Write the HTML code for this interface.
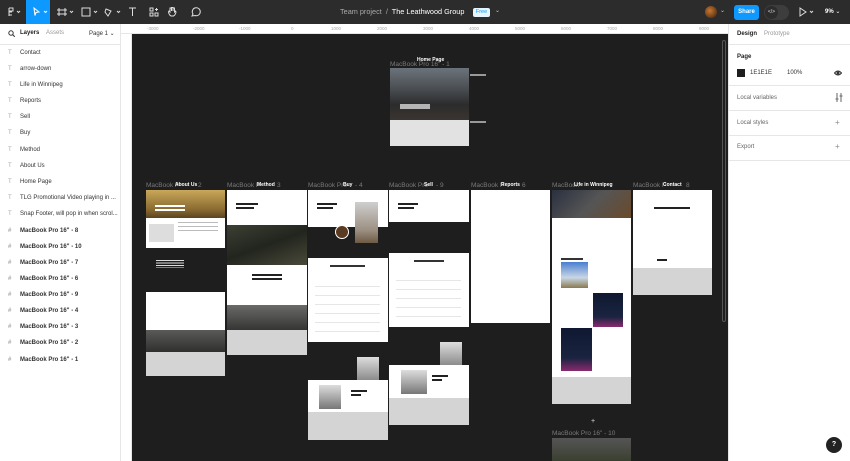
<!DOCTYPE html>
<html><head><meta charset="utf-8"><style>
*{margin:0;padding:0;box-sizing:border-box}
body{width:850px;height:461px;overflow:hidden;background:#1e1e1e;font-family:"Liberation Sans",sans-serif;position:relative}
.a{position:absolute}
.top{left:0;top:0;width:850px;height:24px;background:#2c2c2c}
.left{left:0;top:24px;width:121px;height:437px;background:#fff;border-right:1px solid #e6e6e6}
.right{left:728px;top:24px;width:122px;height:437px;background:#fff;border-left:1px solid #e6e6e6}
.hr{left:121px;top:24px;width:607px;height:10px;background:#fff;border-bottom:1px solid #e6e6e6}
.vr{left:121px;top:34px;width:11px;height:427px;background:#fff;border-right:1px solid #e6e6e6}
.ly{left:8px;font-size:6px;color:#333;height:10px;line-height:10px;white-space:nowrap}
.ly i{font-style:normal;color:#aaa;display:inline-block;width:12px}
.ly.b{font-weight:bold}
.rl{font-size:4.5px;color:#aaa}
.w{background:#fff}.d{background:#232323}.g{background:#d4d4d4}
.lbl{font-size:6.5px;color:#7a7a7a;white-space:nowrap}
.lw{font-size:5px;color:#fff;font-weight:bold;white-space:nowrap}
.t{background:#222;height:2px}
</style></head><body>
<div class="a top">
 <div class="a" style="left:26px;top:0;width:24px;height:24px;background:#0d99ff"></div>
 <svg class="a" style="left:0;top:0" width="210" height="24" fill="none" stroke="#ddd" stroke-width="1">
  <path d="M9 8v8M9 8h4v3H9M9 12h3M9 15h3M17 11l1.5 1.5L20 11"/>
  <path d="M34 8l5 4-3 .5-1 3z" stroke="#fff"/><path d="M44 11l1.5 1.5L47 11" stroke="#fff"/>
  <path d="M59 8v8M65 8v8M57 10h10M57 14h10M70 11l1.5 1.5L73 11"/>
  <rect x="82" y="8" width="8" height="8"/><path d="M94 11l1.5 1.5L97 11"/>
  <path d="M106 9l5 2-3 5-3-4zM117 11l1.5 1.5L120 11"/>
  <path d="M129 8h7M132.5 8v8"/>
  <rect x="150" y="8" width="3" height="3"/><rect x="150" y="13" width="3" height="3"/><rect x="155" y="13" width="3" height="3"/><path d="M156.5 8v3M155 9.5h3"/>
  <path d="M171 16c-2-1-3-4-2-5l1 1V8h1.5v3V7.5h1.5V11V8h1.5v4l1-1c1 1 0 4-2 5z"/>
  <path d="M192 16l1-2a4 4 0 1 1 2 1.5z"/>
 </svg>
 <div class="a" style="left:340px;top:7px;font-size:7.3px;color:#aaa;white-space:nowrap">Team project &nbsp;/&nbsp; <span style="color:#fff">The Leathwood Group</span></div>
 <div class="a" style="left:473px;top:8px;width:17px;height:9px;background:#e5f4ff;color:#0d99ff;font-size:5.5px;text-align:center;line-height:9px;border-radius:2px">Free</div>
 <div class="a" style="left:495px;top:7px;font-size:6px;color:#ccc">⌄</div>
 <div class="a" style="left:705px;top:6px;width:12px;height:12px;border-radius:6px;background:radial-gradient(circle at 40% 40%,#c9772e,#3b2010)"></div>
 <div class="a" style="left:720px;top:7px;font-size:6px;color:#ccc">⌄</div>
 <div class="a" style="left:734px;top:5px;width:25px;height:15px;background:#0d99ff;border-radius:3px;color:#fff;font-size:6px;font-weight:bold;text-align:center;line-height:15px">Share</div>
 <div class="a" style="left:764px;top:5px;width:25px;height:15px;background:#3d3d3d;border-radius:8px"><div class="a" style="left:1px;top:1px;width:13px;height:13px;border-radius:7px;background:#2c2c2c;color:#ddd;font-size:5px;text-align:center;line-height:13px">&lt;/&gt;</div></div>
 <svg class="a" style="left:798px;top:7px" width="20" height="10" fill="none" stroke="#ddd"><path d="M2 1l6 4-6 4z"/><path d="M12 4l1.5 1.5L15 4"/></svg>
 <div class="a" style="left:825px;top:8px;font-size:6px;color:#fff;font-weight:bold">9% <span style="font-weight:normal">⌄</span></div>
</div>

<div class="a left">
 <svg class="a" style="left:8px;top:6px" width="7" height="7" fill="none" stroke="#333"><circle cx="3" cy="3" r="2.2"/><path d="M4.6 4.6L6.8 6.8"/></svg>
 <div class="a" style="left:20px;top:6px;font-size:6px;color:#222;font-weight:bold">Layers</div>
 <div class="a" style="left:46px;top:6px;font-size:6px;color:#999">Assets</div>
 <div class="a" style="left:89px;top:6px;font-size:6px;color:#333">Page 1 ⌄</div>
 <div class="a" style="left:0;top:20px;width:121px;border-top:1px solid #e6e6e6"></div>
</div>
<div class="a ly" style="top:48px"><i>T</i>Contact</div>
<div class="a ly" style="top:64px"><i>T</i>arrow-down</div>
<div class="a ly" style="top:80px"><i>T</i>Life in Winnipeg</div>
<div class="a ly" style="top:96px"><i>T</i>Reports</div>
<div class="a ly" style="top:112px"><i>T</i>Sell</div>
<div class="a ly" style="top:128px"><i>T</i>Buy</div>
<div class="a ly" style="top:145px"><i>T</i>Method</div>
<div class="a ly" style="top:161px"><i>T</i>About Us</div>
<div class="a ly" style="top:177px"><i>T</i>Home Page</div>
<div class="a ly" style="top:193px"><i>T</i>TLG Promotional Video playing in ...</div>
<div class="a ly" style="top:209px"><i>T</i>Snap Footer, will pop in when scrol...</div>
<div class="a ly b" style="top:226px"><i>#</i>MacBook Pro 16" - 8</div>
<div class="a ly b" style="top:242px"><i>#</i>MacBook Pro 16" - 10</div>
<div class="a ly b" style="top:258px"><i>#</i>MacBook Pro 16" - 7</div>
<div class="a ly b" style="top:274px"><i>#</i>MacBook Pro 16" - 6</div>
<div class="a ly b" style="top:290px"><i>#</i>MacBook Pro 16" - 9</div>
<div class="a ly b" style="top:306px"><i>#</i>MacBook Pro 16" - 4</div>
<div class="a ly b" style="top:322px"><i>#</i>MacBook Pro 16" - 3</div>
<div class="a ly b" style="top:338px"><i>#</i>MacBook Pro 16" - 2</div>
<div class="a ly b" style="top:355px"><i>#</i>MacBook Pro 16" - 1</div>

<div class="a hr">
 <span class="a rl" style="left:26px;top:2px">-3000</span><span class="a rl" style="left:72px;top:2px">-2000</span><span class="a rl" style="left:118px;top:2px">-1000</span><span class="a rl" style="left:170px;top:2px">0</span><span class="a rl" style="left:210px;top:2px">1000</span><span class="a rl" style="left:256px;top:2px">2000</span><span class="a rl" style="left:302px;top:2px">3000</span><span class="a rl" style="left:348px;top:2px">4000</span><span class="a rl" style="left:394px;top:2px">5000</span><span class="a rl" style="left:440px;top:2px">6000</span><span class="a rl" style="left:486px;top:2px">7000</span><span class="a rl" style="left:532px;top:2px">8000</span><span class="a rl" style="left:578px;top:2px">9000</span>
</div>
<div class="a vr"></div>

<div class="a lw" style="left:417px;top:57px">Home Page</div>
<div class="a lbl" style="left:390px;top:61px">MacBook Pro 16" - 1</div>
<div class="a" style="left:390px;top:68px;width:79px;height:52px;background:linear-gradient(180deg,#6b737a 0%,#4a4e52 40%,#2b2c2c 70%,#3a3430 100%)"></div>
<div class="a" style="left:400px;top:104px;width:30px;height:5px;background:#eee;opacity:.7"></div>
<div class="a" style="left:390px;top:120px;width:79px;height:26px;background:#e2e2e2"></div>
<div class="a" style="left:470px;top:74px;width:16px;height:1.5px;background:#999"></div>
<div class="a" style="left:470px;top:121px;width:16px;height:1.5px;background:#999"></div>

<div class="a lbl" style="left:146px;top:182px">MacBook P</div><div class="a lw" style="left:175px;top:182px">About Us</div><div class="a lbl" style="left:198px;top:182px">2</div>
<div class="a lbl" style="left:227px;top:182px">MacBook P</div><div class="a lw" style="left:257px;top:182px">Method</div><div class="a lbl" style="left:277px;top:182px">3</div>
<div class="a lbl" style="left:308px;top:182px">MacBook Pro</div><div class="a lw" style="left:343px;top:182px">Buy</div><div class="a lbl" style="left:355px;top:182px">- 4</div>
<div class="a lbl" style="left:389px;top:182px">MacBook Pro</div><div class="a lw" style="left:424px;top:182px">Sell</div><div class="a lbl" style="left:436px;top:182px">- 9</div>
<div class="a lbl" style="left:471px;top:182px">MacBook P</div><div class="a lw" style="left:501px;top:182px">Reports</div><div class="a lbl" style="left:522px;top:182px">6</div>
<div class="a lbl" style="left:552px;top:182px">MacBook</div><div class="a lw" style="left:574px;top:182px">Life in Winnipeg</div>
<div class="a lbl" style="left:633px;top:182px">MacBook P</div><div class="a lw" style="left:663px;top:182px">Contact</div><div class="a lbl" style="left:686px;top:182px">8</div>

<div class="a w" style="left:146px;top:190px;width:79px;height:58px"></div>
<div class="a" style="left:146px;top:190px;width:79px;height:28px;background:linear-gradient(180deg,#c9a85a,#8a6a30 70%,#5a4420)"></div>
<div class="a" style="left:155px;top:205px;width:30px;height:2px;background:#fff"></div><div class="a" style="left:155px;top:209px;width:30px;height:2px;background:#fff"></div>
<div class="a" style="left:149px;top:224px;width:25px;height:18px;background:#ddd"></div>
<div class="a t" style="left:178px;top:222px;width:40px;height:1px;background:#bbb"></div>
<div class="a t" style="left:178px;top:226px;width:40px;height:1px;background:#bbb"></div>
<div class="a t" style="left:178px;top:230px;width:40px;height:1px;background:#bbb"></div>
<div class="a" style="left:156px;top:260px;width:28px;height:8px;background:repeating-linear-gradient(180deg,#ddd 0 1px,transparent 1px 2.5px)"></div>
<div class="a w" style="left:146px;top:292px;width:79px;height:38px"></div>
<div class="a" style="left:146px;top:330px;width:79px;height:22px;background:linear-gradient(180deg,#5a5a58,#2f2f2d)"></div>
<div class="a g" style="left:146px;top:352px;width:79px;height:24px"></div>

<div class="a w" style="left:227px;top:190px;width:80px;height:35px"></div>
<div class="a" style="left:236px;top:203px;width:22px;height:2px;background:#222"></div><div class="a" style="left:236px;top:207px;width:18px;height:2px;background:#222"></div>
<div class="a" style="left:227px;top:225px;width:80px;height:40px;background:linear-gradient(160deg,#3c3f33,#22251e 50%,#4a4a3a)"></div>
<div class="a w" style="left:227px;top:265px;width:80px;height:40px"></div>
<div class="a" style="left:252px;top:274px;width:30px;height:2px;background:#222"></div><div class="a" style="left:252px;top:278px;width:30px;height:2px;background:#222"></div>
<div class="a" style="left:227px;top:305px;width:80px;height:25px;background:linear-gradient(180deg,#6a6b68,#353533)"></div>
<div class="a g" style="left:227px;top:330px;width:80px;height:25px"></div>

<div class="a w" style="left:308px;top:190px;width:80px;height:37px"></div>
<div class="a" style="left:317px;top:203px;width:20px;height:2px;background:#222"></div><div class="a" style="left:317px;top:207px;width:16px;height:2px;background:#222"></div>
<div class="a" style="left:355px;top:202px;width:23px;height:41px;background:linear-gradient(180deg,#cfcfcf,#9a8e80 70%,#6d5a45)"></div>
<div class="a" style="left:335px;top:225px;width:14px;height:14px;border-radius:7px;background:#5a3a20;border:1.5px solid #fff"></div>
<div class="a w" style="left:308px;top:258px;width:80px;height:84px"></div>
<div class="a" style="left:330px;top:265px;width:35px;height:1.5px;background:#333"></div>
<div class="a" style="left:315px;top:278px;width:65px;height:58px;background:repeating-linear-gradient(180deg,#fff 0 8px,#e6e6e6 8px 9px)"></div>
<div class="a" style="left:357px;top:357px;width:22px;height:24px;background:linear-gradient(180deg,#ddd,#888)"></div>
<div class="a w" style="left:308px;top:380px;width:80px;height:32px"></div>
<div class="a" style="left:319px;top:385px;width:22px;height:24px;background:linear-gradient(180deg,#ddd,#777)"></div>
<div class="a" style="left:351px;top:390px;width:16px;height:2px;background:#222"></div><div class="a" style="left:351px;top:394px;width:10px;height:2px;background:#222"></div>
<div class="a g" style="left:308px;top:412px;width:80px;height:28px"></div>

<div class="a w" style="left:389px;top:190px;width:80px;height:32px"></div>
<div class="a" style="left:398px;top:203px;width:20px;height:2px;background:#222"></div><div class="a" style="left:398px;top:207px;width:16px;height:2px;background:#222"></div>
<div class="a w" style="left:389px;top:253px;width:80px;height:74px"></div>
<div class="a" style="left:414px;top:260px;width:30px;height:1.5px;background:#333"></div>
<div class="a" style="left:396px;top:272px;width:65px;height:52px;background:repeating-linear-gradient(180deg,#fff 0 8px,#e6e6e6 8px 9px)"></div>
<div class="a" style="left:440px;top:342px;width:22px;height:24px;background:linear-gradient(180deg,#ddd,#888)"></div>
<div class="a w" style="left:389px;top:365px;width:80px;height:33px"></div>
<div class="a" style="left:401px;top:370px;width:26px;height:24px;background:linear-gradient(180deg,#ddd,#777)"></div>
<div class="a" style="left:432px;top:375px;width:16px;height:2px;background:#222"></div><div class="a" style="left:432px;top:379px;width:10px;height:2px;background:#222"></div>
<div class="a g" style="left:389px;top:398px;width:80px;height:27px"></div>

<div class="a w" style="left:471px;top:190px;width:79px;height:133px"></div>

<div class="a" style="left:552px;top:190px;width:79px;height:28px;background:linear-gradient(135deg,#2a3040,#555 50%,#6a4a2a)"></div>
<div class="a w" style="left:552px;top:218px;width:79px;height:159px"></div>
<div class="a" style="left:561px;top:258px;width:22px;height:1.5px;background:#333"></div>
<div class="a" style="left:561px;top:262px;width:27px;height:26px;background:linear-gradient(180deg,#4a7fd0,#c9d6e6 60%,#8a7a50)"></div>
<div class="a" style="left:593px;top:293px;width:30px;height:34px;background:linear-gradient(180deg,#0e1830,#1a2440 70%,#8a2a70)"></div>
<div class="a" style="left:561px;top:328px;width:31px;height:43px;background:linear-gradient(180deg,#0e1830,#1a2440 70%,#8a2a70)"></div>
<div class="a g" style="left:552px;top:377px;width:79px;height:27px"></div>

<div class="a w" style="left:633px;top:190px;width:79px;height:78px"></div>
<div class="a" style="left:654px;top:207px;width:36px;height:2px;background:#222"></div>
<div class="a" style="left:657px;top:259px;width:10px;height:2px;background:#222"></div>
<div class="a g" style="left:633px;top:268px;width:79px;height:27px"></div>

<div class="a" style="left:591px;top:418px;font-size:7px;color:#ddd">+</div>
<div class="a lbl" style="left:552px;top:430px">MacBook Pro 16" - 10</div>
<div class="a" style="left:552px;top:438px;width:79px;height:23px;background:linear-gradient(180deg,#555,#3a4030)"></div>

<div class="a" style="left:722px;top:40px;width:4px;height:282px;border:1px solid #555;border-radius:2px"></div>

<div class="a right">
 <div class="a" style="left:8px;top:7px;font-size:6px;color:#222;font-weight:bold">Design</div>
 <div class="a" style="left:35px;top:7px;font-size:6px;color:#999">Prototype</div>
 <div class="a" style="left:0;top:20px;width:122px;border-top:1px solid #e6e6e6"></div>
 <div class="a" style="left:8px;top:30px;font-size:6px;color:#222;font-weight:bold">Page</div>
 <div class="a" style="left:8px;top:45px;width:8px;height:8px;background:#1e1e1e"></div>
 <div class="a" style="left:21px;top:46px;font-size:6px;color:#333">1E1E1E</div>
 <div class="a" style="left:58px;top:46px;font-size:6px;color:#333">100%</div>
 <svg class="a" style="left:105px;top:46px" width="8" height="6" fill="none" stroke="#333"><path d="M.5 3Q4 -1 7.5 3Q4 7 .5 3z"/><circle cx="4" cy="3" r="1" fill="#333"/></svg>
 <div class="a" style="left:0;top:61px;width:122px;border-top:1px solid #e6e6e6"></div>
 <div class="a" style="left:8px;top:71px;font-size:6px;color:#666">Local variables</div>
 <svg class="a" style="left:106px;top:69px" width="8" height="9" fill="none" stroke="#666"><path d="M2 0v9M6 0v9M0.5 6h3M4.5 3h3"/></svg>
 <div class="a" style="left:0;top:86px;width:122px;border-top:1px solid #e6e6e6"></div>
 <div class="a" style="left:8px;top:96px;font-size:6px;color:#666">Local styles</div>
 <div class="a" style="left:106px;top:94px;font-size:8px;color:#888">+</div>
 <div class="a" style="left:0;top:111px;width:122px;border-top:1px solid #e6e6e6"></div>
 <div class="a" style="left:8px;top:120px;font-size:6px;color:#666">Export</div>
 <div class="a" style="left:106px;top:118px;font-size:8px;color:#888">+</div>
 <div class="a" style="left:0;top:136px;width:122px;border-top:1px solid #e6e6e6"></div>
 <div class="a" style="left:97px;top:413px;width:16px;height:16px;border-radius:8px;background:#222;color:#fff;font-size:7px;text-align:center;line-height:16px;font-weight:bold">?</div>
</div>
</body></html>
